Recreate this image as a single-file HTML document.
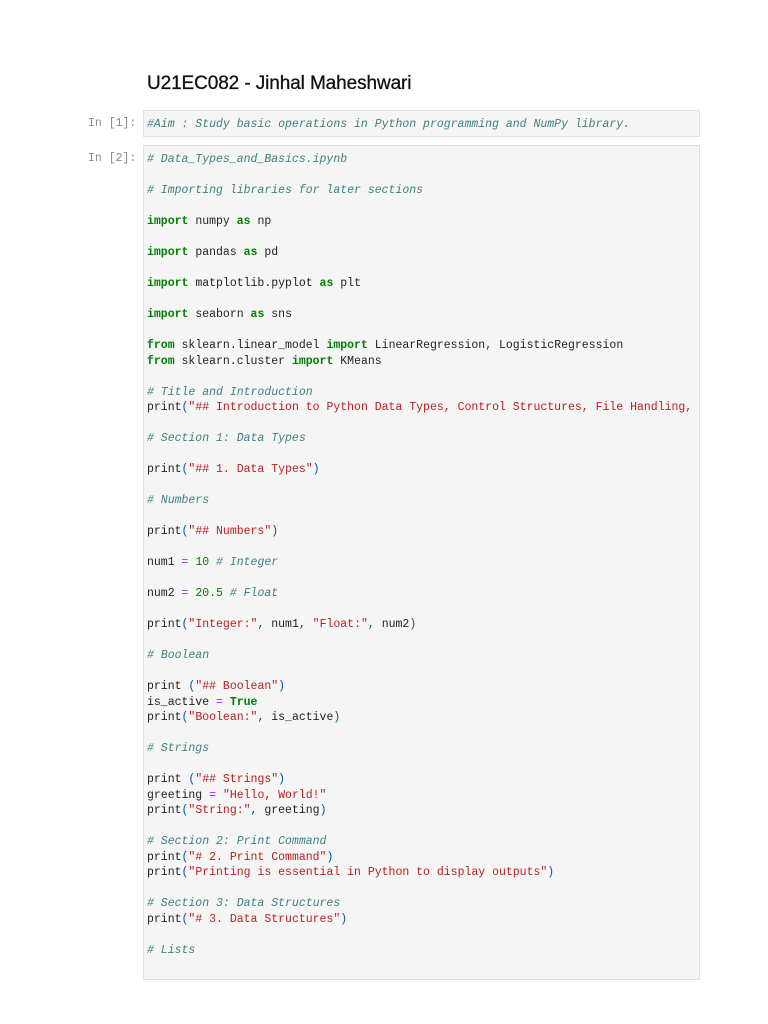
<!DOCTYPE html>
<html><head><meta charset="utf-8">
<style>
html,body{margin:0;padding:0;background:#fff;width:768px;height:1024px;overflow:hidden;position:relative}
.t{position:absolute;left:147px;top:73px;font-family:"Liberation Sans",sans-serif;font-size:19px;color:#111;letter-spacing:-0.1px;-webkit-text-stroke:0.3px #111}
.p{position:absolute;left:88px;font-family:"Liberation Mono",monospace;font-size:11.5px;color:#888}
.c{position:absolute;left:143px;width:557px;background:#f5f5f5;border:1px solid #e0e0e0;box-sizing:border-box}
pre{margin:0;font-family:"Liberation Mono",monospace;font-size:11.5px;line-height:15.5px;color:#222;padding-left:3px;white-space:pre;overflow:hidden}
.k{color:#008000;font-weight:bold}
.m{color:#408080;font-style:italic}
.s{color:#BA2121}
.o{color:#AA22FF}
.n{color:#008000}
.b{color:#0055AA}
</style></head><body>
<div class="t">U21EC082 - Jinhal Maheshwari</div>
<div class="p" style="top:117px">In [1]:</div>
<div class="c" style="top:110px;height:27px"><pre style="padding-top:6px"><span class="m">#Aim : Study basic operations in Python programming and NumPy library.</span></pre></div>
<div class="p" style="top:152px">In [2]:</div>
<div class="c" style="top:145px;height:835px"><pre style="padding-top:6px"><span class="m"># Data_Types_and_Basics.ipynb</span>

<span class="m"># Importing libraries for later sections</span>

<span class="k">import</span> numpy <span class="k">as</span> np

<span class="k">import</span> pandas <span class="k">as</span> pd

<span class="k">import</span> matplotlib.pyplot <span class="k">as</span> plt

<span class="k">import</span> seaborn <span class="k">as</span> sns

<span class="k">from</span> sklearn.linear_model <span class="k">import</span> LinearRegression<span class="b">,</span> LogisticRegression
<span class="k">from</span> sklearn.cluster <span class="k">import</span> KMeans

<span class="m"># Title and Introduction</span>
print<span class="b">(</span><span class="s">"## Introduction to Python Data Types, Control Structures, File Handling, </span>

<span class="m"># Section 1: Data Types</span>

print<span class="b">(</span><span class="s">"## 1. Data Types"</span><span class="b">)</span>

<span class="m"># Numbers</span>

print<span class="b">(</span><span class="s">"## Numbers"</span><span class="b">)</span>

num1 <span class="o">=</span> <span class="n">10</span> <span class="m"># Integer</span>

num2 <span class="o">=</span> <span class="n">20.5</span> <span class="m"># Float</span>

print<span class="b">(</span><span class="s">"Integer:"</span><span class="b">,</span> num1<span class="b">,</span> <span class="s">"Float:"</span><span class="b">,</span> num2<span class="b">)</span>

<span class="m"># Boolean</span>

print <span class="b">(</span><span class="s">"## Boolean"</span><span class="b">)</span>
is_active <span class="o">=</span> <span class="k">True</span>
print<span class="b">(</span><span class="s">"Boolean:"</span><span class="b">,</span> is_active<span class="b">)</span>

<span class="m"># Strings</span>

print <span class="b">(</span><span class="s">"## Strings"</span><span class="b">)</span>
greeting <span class="o">=</span> <span class="s">"Hello, World!"</span>
print<span class="b">(</span><span class="s">"String:"</span><span class="b">,</span> greeting<span class="b">)</span>

<span class="m"># Section 2: Print Command</span>
print<span class="b">(</span><span class="s">"# 2. Print Command"</span><span class="b">)</span>
print<span class="b">(</span><span class="s">"Printing is essential in Python to display outputs"</span><span class="b">)</span>

<span class="m"># Section 3: Data Structures</span>
print<span class="b">(</span><span class="s">"# 3. Data Structures"</span><span class="b">)</span>

<span class="m"># Lists</span>
</pre></div>
</body></html>
